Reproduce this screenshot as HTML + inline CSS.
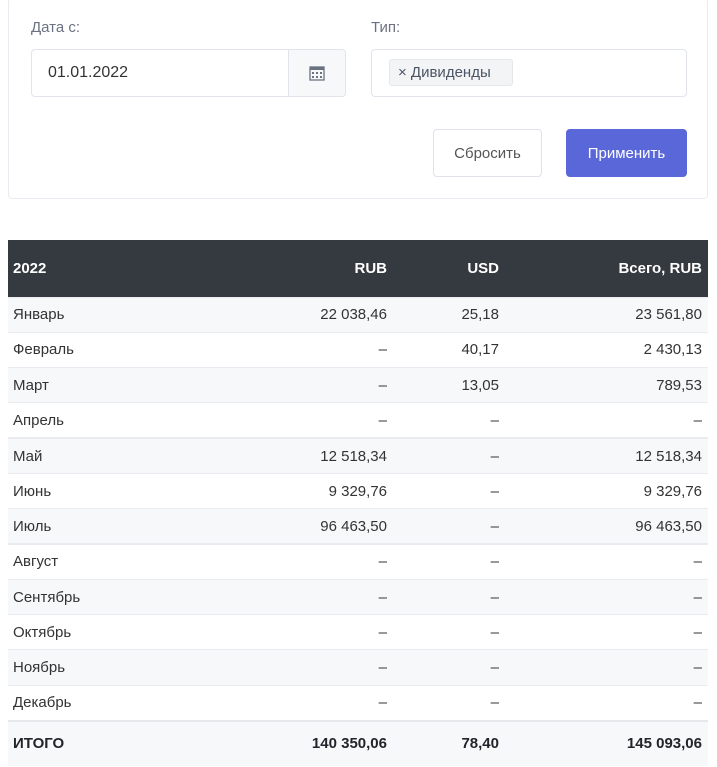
<!DOCTYPE html>
<html><head><meta charset="utf-8"><style>
*{box-sizing:border-box;margin:0;padding:0}
body{width:717px;height:767px;background:#fff;font-family:"Liberation Sans",sans-serif;color:#212529;overflow:hidden;position:relative}
.card{position:absolute;left:8px;top:-2px;width:700px;height:201px;border:1px solid #e9ebf0;border-radius:4px;background:#fff}
.lbl{position:absolute;top:20px;font-size:15px;color:#6b7280}
.inp{position:absolute;top:50px;height:48px;border:1px solid #e1e4ea;border-radius:4px;background:#fff}
.btn{position:absolute;top:130px;height:48px;border-radius:4px;font-size:15px;display:flex;align-items:center;justify-content:center}
table{position:absolute;left:8px;top:240px;width:700px;border-collapse:collapse;font-size:15px}
th{background:#343a40;color:#fff;font-weight:bold;height:57px;text-align:right;padding:0 6px}
th:first-child,td:first-child{text-align:left;padding-left:5px}
td{height:35.3px;text-align:right;padding:0 6px;border-top:1px solid #e9ebf0;color:#333}
tr.g td{background:#f7f8fa}
tr.q td{border-top:2px solid #e9ebf0}
tr.t td{font-weight:bold;height:45px;border-top:2px solid #e6e8ec;background:#f7f8fa;color:#212529}
</style></head><body>
<div class="card">
<div class="lbl" style="left:22px">Дата с:</div>
<div class="lbl" style="left:362px">Тип:</div>
<div class="inp" style="left:22px;width:315px;">
<div style="position:absolute;left:16px;top:14px;font-size:16px;color:#333">01.01.2022</div>
<div style="position:absolute;right:0;top:0;width:57px;height:46px;background:#f7f8fa;border-left:1px solid #e1e4ea;border-radius:0 4px 4px 0">
<svg style="position:absolute;left:20px;top:15px" width="16" height="16" viewBox="0 0 16 16"><rect x="1" y="2" width="14" height="13" fill="none" stroke="#6b7280" stroke-width="1.3"/><rect x="1" y="2" width="14" height="3" fill="#6b7280"/><g fill="#6b7280"><rect x="3" y="7" width="2" height="2"/><rect x="7" y="7" width="2" height="2"/><rect x="11" y="7" width="2" height="2"/><rect x="3" y="11" width="2" height="2"/><rect x="7" y="11" width="2" height="2"/><rect x="11" y="11" width="2" height="2"/></g></svg>
</div></div>
<div class="inp" style="left:362px;width:316px;">
<div style="position:absolute;left:17px;top:9px;height:27px;width:124px;background:#f3f4f6;border:1px solid #e5e7eb;border-radius:3px;font-size:15px;color:#4b5563;padding:4px 8px;white-space:nowrap">× Дивиденды</div>
</div>
<div class="btn" style="left:424px;width:109px;border:1px solid #dfe2e8;color:#555">Сбросить</div>
<div class="btn" style="left:557px;width:121px;background:#5a67d8;color:#fff">Применить</div>
</div>
<table>
<tr><th>2022</th><th style="width:120px">RUB</th><th style="width:112px">USD</th><th style="width:203px">Всего, RUB</th></tr>
<tr class="g"><td>Январь</td><td>22 038,46</td><td>25,18</td><td>23 561,80</td></tr>
<tr><td>Февраль</td><td>–</td><td>40,17</td><td>2 430,13</td></tr>
<tr class="g"><td>Март</td><td>–</td><td>13,05</td><td>789,53</td></tr>
<tr><td>Апрель</td><td>–</td><td>–</td><td>–</td></tr>
<tr class="g q"><td>Май</td><td>12 518,34</td><td>–</td><td>12 518,34</td></tr>
<tr><td>Июнь</td><td>9 329,76</td><td>–</td><td>9 329,76</td></tr>
<tr class="g"><td>Июль</td><td>96 463,50</td><td>–</td><td>96 463,50</td></tr>
<tr class="q"><td>Август</td><td>–</td><td>–</td><td>–</td></tr>
<tr class="g"><td>Сентябрь</td><td>–</td><td>–</td><td>–</td></tr>
<tr><td>Октябрь</td><td>–</td><td>–</td><td>–</td></tr>
<tr class="g"><td>Ноябрь</td><td>–</td><td>–</td><td>–</td></tr>
<tr><td>Декабрь</td><td>–</td><td>–</td><td>–</td></tr>
<tr class="t"><td>ИТОГО</td><td>140 350,06</td><td>78,40</td><td>145 093,06</td></tr>
</table>
</body></html>
